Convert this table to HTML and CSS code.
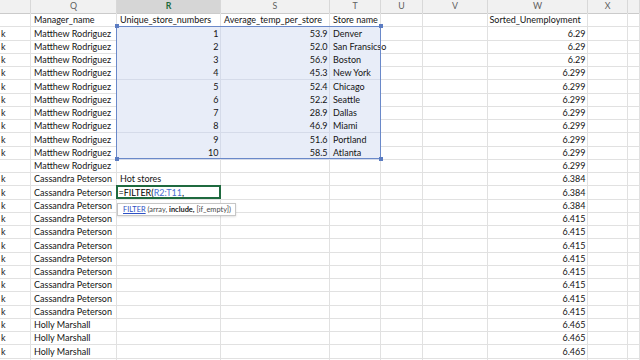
FILE: index.html
```html
<!DOCTYPE html>
<html lang="en">
<head>
<meta charset="utf-8">
<title>Sheet</title>
<link rel="stylesheet" href="styles.css">
</head>
<body>
<div class="sheet">
  <div class="row hd"><div class="c"></div><div class="c">Q</div><div class="c on">R</div><div class="c">S</div><div class="c">T</div><div class="c">U</div><div class="c">V</div><div class="c">W</div><div class="c">X</div><div class="c"></div></div>
  <div class="row"><div class="c p"></div><div class="c">Manager_name</div><div class="c">Unique_store_numbers</div><div class="c">Average_temp_per_store</div><div class="c">Store name</div><div class="c"></div><div class="c"></div><div class="c w">Sorted_Unemployment</div><div class="c"></div><div class="c"></div></div>
  <div class="row"><div class="c p">k</div><div class="c">Matthew Rodriguez</div><div class="c n s">1</div><div class="c n s">53.9</div><div class="c s">Denver</div><div class="c"></div><div class="c"></div><div class="c n">6.29</div><div class="c"></div><div class="c"></div></div>
  <div class="row"><div class="c p">k</div><div class="c">Matthew Rodriguez</div><div class="c n s">2</div><div class="c n s">52.0</div><div class="c s">San Fransicso</div><div class="c"></div><div class="c"></div><div class="c n">6.29</div><div class="c"></div><div class="c"></div></div>
  <div class="row"><div class="c p">k</div><div class="c">Matthew Rodriguez</div><div class="c n s">3</div><div class="c n s">56.9</div><div class="c s">Boston</div><div class="c"></div><div class="c"></div><div class="c n">6.29</div><div class="c"></div><div class="c"></div></div>
  <div class="row"><div class="c p">k</div><div class="c">Matthew Rodriguez</div><div class="c n s">4</div><div class="c n s">45.3</div><div class="c s">New York</div><div class="c"></div><div class="c"></div><div class="c n">6.299</div><div class="c"></div><div class="c"></div></div>
  <div class="row"><div class="c p">k</div><div class="c">Matthew Rodriguez</div><div class="c n s">5</div><div class="c n s">52.4</div><div class="c s">Chicago</div><div class="c"></div><div class="c"></div><div class="c n">6.299</div><div class="c"></div><div class="c"></div></div>
  <div class="row"><div class="c p">k</div><div class="c">Matthew Rodriguez</div><div class="c n s">6</div><div class="c n s">52.2</div><div class="c s">Seattle</div><div class="c"></div><div class="c"></div><div class="c n">6.299</div><div class="c"></div><div class="c"></div></div>
  <div class="row"><div class="c p">k</div><div class="c">Matthew Rodriguez</div><div class="c n s">7</div><div class="c n s">28.9</div><div class="c s">Dallas</div><div class="c"></div><div class="c"></div><div class="c n">6.299</div><div class="c"></div><div class="c"></div></div>
  <div class="row"><div class="c p">k</div><div class="c">Matthew Rodriguez</div><div class="c n s">8</div><div class="c n s">46.9</div><div class="c s">Miami</div><div class="c"></div><div class="c"></div><div class="c n">6.299</div><div class="c"></div><div class="c"></div></div>
  <div class="row"><div class="c p">k</div><div class="c">Matthew Rodriguez</div><div class="c n s">9</div><div class="c n s">51.6</div><div class="c s">Portland</div><div class="c"></div><div class="c"></div><div class="c n">6.299</div><div class="c"></div><div class="c"></div></div>
  <div class="row"><div class="c p">k</div><div class="c">Matthew Rodriguez</div><div class="c n s">10</div><div class="c n s">58.5</div><div class="c s">Atlanta</div><div class="c"></div><div class="c"></div><div class="c n">6.299</div><div class="c"></div><div class="c"></div></div>
  <div class="row"><div class="c p"></div><div class="c">Matthew Rodriguez</div><div class="c"></div><div class="c"></div><div class="c"></div><div class="c"></div><div class="c"></div><div class="c n">6.299</div><div class="c"></div><div class="c"></div></div>
  <div class="row"><div class="c p">k</div><div class="c">Cassandra Peterson</div><div class="c">Hot stores</div><div class="c"></div><div class="c"></div><div class="c"></div><div class="c"></div><div class="c n">6.384</div><div class="c"></div><div class="c"></div></div>
  <div class="row"><div class="c p">k</div><div class="c">Cassandra Peterson</div><div class="c f">=FILTER(<span class="ref">R2:T11</span>,</div><div class="c"></div><div class="c"></div><div class="c"></div><div class="c"></div><div class="c n">6.384</div><div class="c"></div><div class="c"></div></div>
  <div class="row"><div class="c p">k</div><div class="c">Cassandra Peterson</div><div class="c"></div><div class="c"></div><div class="c"></div><div class="c"></div><div class="c"></div><div class="c n">6.384</div><div class="c"></div><div class="c"></div></div>
  <div class="row"><div class="c p">k</div><div class="c">Cassandra Peterson</div><div class="c"></div><div class="c"></div><div class="c"></div><div class="c"></div><div class="c"></div><div class="c n">6.415</div><div class="c"></div><div class="c"></div></div>
  <div class="row"><div class="c p">k</div><div class="c">Cassandra Peterson</div><div class="c"></div><div class="c"></div><div class="c"></div><div class="c"></div><div class="c"></div><div class="c n">6.415</div><div class="c"></div><div class="c"></div></div>
  <div class="row"><div class="c p">k</div><div class="c">Cassandra Peterson</div><div class="c"></div><div class="c"></div><div class="c"></div><div class="c"></div><div class="c"></div><div class="c n">6.415</div><div class="c"></div><div class="c"></div></div>
  <div class="row"><div class="c p">k</div><div class="c">Cassandra Peterson</div><div class="c"></div><div class="c"></div><div class="c"></div><div class="c"></div><div class="c"></div><div class="c n">6.415</div><div class="c"></div><div class="c"></div></div>
  <div class="row"><div class="c p">k</div><div class="c">Cassandra Peterson</div><div class="c"></div><div class="c"></div><div class="c"></div><div class="c"></div><div class="c"></div><div class="c n">6.415</div><div class="c"></div><div class="c"></div></div>
  <div class="row"><div class="c p">k</div><div class="c">Cassandra Peterson</div><div class="c"></div><div class="c"></div><div class="c"></div><div class="c"></div><div class="c"></div><div class="c n">6.415</div><div class="c"></div><div class="c"></div></div>
  <div class="row"><div class="c p">k</div><div class="c">Cassandra Peterson</div><div class="c"></div><div class="c"></div><div class="c"></div><div class="c"></div><div class="c"></div><div class="c n">6.415</div><div class="c"></div><div class="c"></div></div>
  <div class="row"><div class="c p">k</div><div class="c">Cassandra Peterson</div><div class="c"></div><div class="c"></div><div class="c"></div><div class="c"></div><div class="c"></div><div class="c n">6.415</div><div class="c"></div><div class="c"></div></div>
  <div class="row"><div class="c p">k</div><div class="c">Holly Marshall</div><div class="c"></div><div class="c"></div><div class="c"></div><div class="c"></div><div class="c"></div><div class="c n">6.465</div><div class="c"></div><div class="c"></div></div>
  <div class="row"><div class="c p">k</div><div class="c">Holly Marshall</div><div class="c"></div><div class="c"></div><div class="c"></div><div class="c"></div><div class="c"></div><div class="c n">6.465</div><div class="c"></div><div class="c"></div></div>
  <div class="row"><div class="c p">k</div><div class="c">Holly Marshall</div><div class="c"></div><div class="c"></div><div class="c"></div><div class="c"></div><div class="c"></div><div class="c n">6.465</div><div class="c"></div><div class="c"></div></div>
  <div class="row"><div class="c p"></div><div class="c"></div><div class="c"></div><div class="c"></div><div class="c"></div><div class="c"></div><div class="c"></div><div class="c"></div><div class="c"></div><div class="c"></div></div>

  <div class="overlay">
    <div class="selection"><span class="hd1"></span><span class="hd2"></span></div>
    <div class="active"></div>
    <div class="tip"><span class="fn">FILTER</span> (array, <b>include,</b> [if_empty])</div>
  </div>
</div>
</body>
</html>
```

FILE: styles.css
```css
:root {
  --cols: 31px 86px 104px 109px 51px 42px 65px 100px 40px 12px;
  --rh: 13.26px;
  --hh: 13.4px;
}
html, body {
  margin: 0;
  padding: 0;
  background: #fff;
}
body {
  width: 640px;
  height: 360px;
  overflow: hidden;
  font-family: Lato, "Open Sans", sans-serif;
  font-size: 9px;
  color: #141414;
}
.sheet {
  position: relative;
  display: flex;
  flex-direction: column;
}
.row {
  display: grid;
  grid-template-columns: var(--cols);
  height: var(--rh);
  flex: none;
}
.c {
  box-sizing: border-box;
  border-right: 1px solid #e1e1e1;
  border-bottom: 1px solid #e1e1e1;
  line-height: 13px;
  padding: 0 2px 0 3px;
  white-space: nowrap;
  min-width: 0;
}
.c.p { padding-left: 1px; }
.c.w { padding-left: 1.5px; }
.c.n { text-align: right; padding-right: 1.5px; }
.c.s { background: #e8edf8; border-right-color: #d5dbe9; border-bottom-color: #d5dbe9; }
.c.f { color: #000; padding-left: 1.5px; }
.ref { color: #4b6fd2; }

.hd { height: var(--hh); }
.hd .c {
  background: #f1f1f1;
  color: #606060;
  text-align: center;
  font-size: 8.8px;
  line-height: 12.6px;
  border-right-color: #d8d8d8;
  border-bottom-color: #cbcbcb;
  padding: 0;
}
.hd .c.on {
  background: #d6d6d6;
  color: #1d6b3c;
  font-weight: 700;
}

.overlay {
  position: absolute;
  inset: 0;
  display: grid;
  grid-template-columns: var(--cols);
  grid-template-rows: var(--hh) repeat(27, var(--rh));
  pointer-events: none;
}
.selection {
  grid-column: 3 / 6;
  grid-row: 3 / 13;
  margin: -1px 0 0 -1px;
  border: 1px solid #6a89c9;
  position: relative;
}
.selection::before, .selection::after, .hd1, .hd2 {
  content: "";
  position: absolute;
  width: 4px;
  height: 4px;
  background: #5b7cc2;
}
.selection::before { left: -2.5px; top: -2.5px; }
.selection::after { right: -2.5px; bottom: -2.5px; }
.hd1 { right: -2.5px; top: -2.5px; }
.hd2 { left: -2.5px; bottom: -2.5px; }

.active {
  grid-column: 3;
  grid-row: 15;
  margin: -1px 0 0 -1px;
  border: 2px solid #1f6a3f;
}
.tip {
  grid-column: 3 / 6;
  grid-row: 16;
  justify-self: start;
  align-self: start;
  margin-top: 4px;
  box-sizing: border-box;
  height: 13px;
  padding: 0 4px 0 5px;
  background: #fff;
  border: 1px solid #c6c6c6;
  box-shadow: 0 1px 2px rgba(0, 0, 0, 0.12);
  font-size: 7.4px;
  line-height: 11px;
  color: #4a4a4a;
  white-space: nowrap;
}
.tip .fn {
  color: #2d50c4;
  text-decoration: underline;
}
.tip b { color: #1a1a1a; }
```
